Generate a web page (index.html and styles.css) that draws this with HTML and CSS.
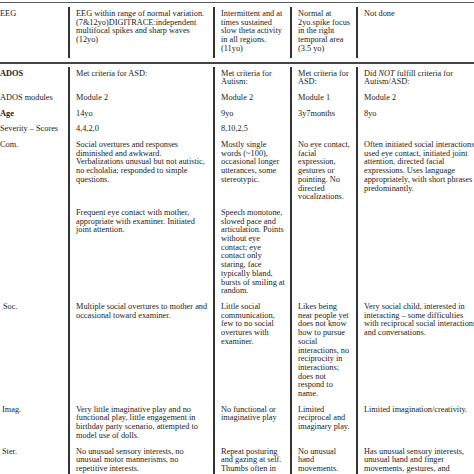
FILE: index.html
```html
<!DOCTYPE html>
<html>
<head>
<meta charset="utf-8">
<link rel="stylesheet" href="styles.css">
</head>
<body>
<div class="table">
  <div class="sec sec-top">
    <div class="row">
      <div class="c c0">EEG</div>
      <div class="c c1">EEG within range of normal variation. (7&amp;12yo)DIGITRACE:independent multifocal spikes and sharp waves (12yo)</div>
      <div class="c c2">Intermittent and at times sustained slow theta activity in all regions. (11yo)</div>
      <div class="c c3">Normal at 2yo.spike focus in the right temporal area (3.5 yo)</div>
      <div class="c c4">Not done</div>
    </div>
  </div>
  <div class="sec sec-main">
    <div class="row">
      <div class="c c0"><b>ADOS</b></div>
      <div class="c c1">Met criteria for ASD:</div>
      <div class="c c2">Met criteria for Autism:</div>
      <div class="c c3">Met criteria for ASD:</div>
      <div class="c c4">Did <i>NOT</i> fulfill criteria for Autism/ASD:</div>
    </div>
    <div class="row">
      <div class="c c0">ADOS modules</div>
      <div class="c c1">Module 2</div>
      <div class="c c2">Module 2</div>
      <div class="c c3">Module 1</div>
      <div class="c c4">Module 2</div>
    </div>
    <div class="row">
      <div class="c c0"><b>Age</b></div>
      <div class="c c1">14yo</div>
      <div class="c c2">9yo</div>
      <div class="c c3">3y7months</div>
      <div class="c c4">8yo</div>
    </div>
    <div class="row">
      <div class="c c0">Severity – Scores</div>
      <div class="c c1">4,4,2,0</div>
      <div class="c c2">8,10,2,5</div>
      <div class="c c3"></div>
      <div class="c c4"></div>
    </div>
    <div class="row">
      <div class="c c0">Com.</div>
      <div class="c c1">Social overtures and responses diminished and awkward. Verbalizations unusual but not autistic, no echolalia; responded to simple questions.</div>
      <div class="c c2">Mostly single words (~100), occasional longer utterances, some stereotypic.</div>
      <div class="c c3">No eye contact, facial expression, gestures or pointing. No directed vocalizations.</div>
      <div class="c c4">Often initiated social interactions, used eye contact, initiated joint attention, directed facial expressions. Uses language appropriately, with short phrases predominantly.</div>
    </div>
    <div class="row">
      <div class="c c0"></div>
      <div class="c c1">Frequent eye contact with mother, appropriate with examiner. Initiated joint attention.</div>
      <div class="c c2">Speech monotone, slowed pace and articulation. Points without eye contact; eye contact only staring, face typically bland, bursts of smiling at random.</div>
      <div class="c c3"></div>
      <div class="c c4"></div>
    </div>
    <div class="row">
      <div class="c c0 ind">Soc.</div>
      <div class="c c1">Multiple social overtures to mother and occasional toward examiner.</div>
      <div class="c c2">Little social communication, few to no social overtures with examiner.</div>
      <div class="c c3">Likes being near people yet does not know how to pursue social interactions, no reciprocity in interactions; does not respond to name.</div>
      <div class="c c4">Very social child, interested in interacting – some difficulties with reciprocal social interactions and conversations.</div>
    </div>
    <div class="row">
      <div class="c c0 ind-s">Imag.</div>
      <div class="c c1">Very little imaginative play and no functional play, little engagement in birthday party scenario, attempted to model use of dolls.</div>
      <div class="c c2">No functional or imaginative play</div>
      <div class="c c3">Limited reciprocal and imaginary play.</div>
      <div class="c c4">Limited imagination/creativity.</div>
    </div>
    <div class="row">
      <div class="c c0 ind-s">Ster.</div>
      <div class="c c1">No unusual sensory interests, no unusual motor mannerisms, no repetitive interests.</div>
      <div class="c c2">Repeat posturing and gazing at self. Thumbs often in mouth.</div>
      <div class="c c3">No unusual hand movements.</div>
      <div class="c c4">Has unusual sensory interests, unusual hand and finger movements, gestures, and vocalizations.</div>
    </div>
  </div>
</div>
</body>
</html>
```
FILE: styles.css
```css
html, body {
  margin: 0;
  padding: 0;
  background: #ffffff;
  overflow: hidden;
}
body {
  width: 474px;
  height: 474px;
  font-family: "Liberation Serif", "Times New Roman", serif;
  font-size: 8.3px;
  line-height: 8.7px;
  color: #1c1c1c;
}
.table {
  width: 620px;
  padding-top: 2px;
}
.sec-top {
  border-top: 1px solid #5a5a5a;
  padding-top: 4px;
  padding-bottom: 4px;
  border-bottom: 2px solid #444;
}
.sec-main {
  padding-top: 3px;
}
.row {
  display: grid;
  grid-template-columns: 68px 145px 77px 66px 130px;
}
.c {
  box-sizing: border-box;
  padding: 3px 4px 4px 6px;
}
.c0 {
  padding-left: 0;
  padding-right: 0;
}
.ind {
  padding-left: 3px;
}
.ind-s {
  padding-left: 2px;
}
.c1, .c2, .c3, .c4 {
  border-left: 2px solid #333;
}
.c4 {
  padding-right: 8px;
}
b {
  font-weight: bold;
}
```
